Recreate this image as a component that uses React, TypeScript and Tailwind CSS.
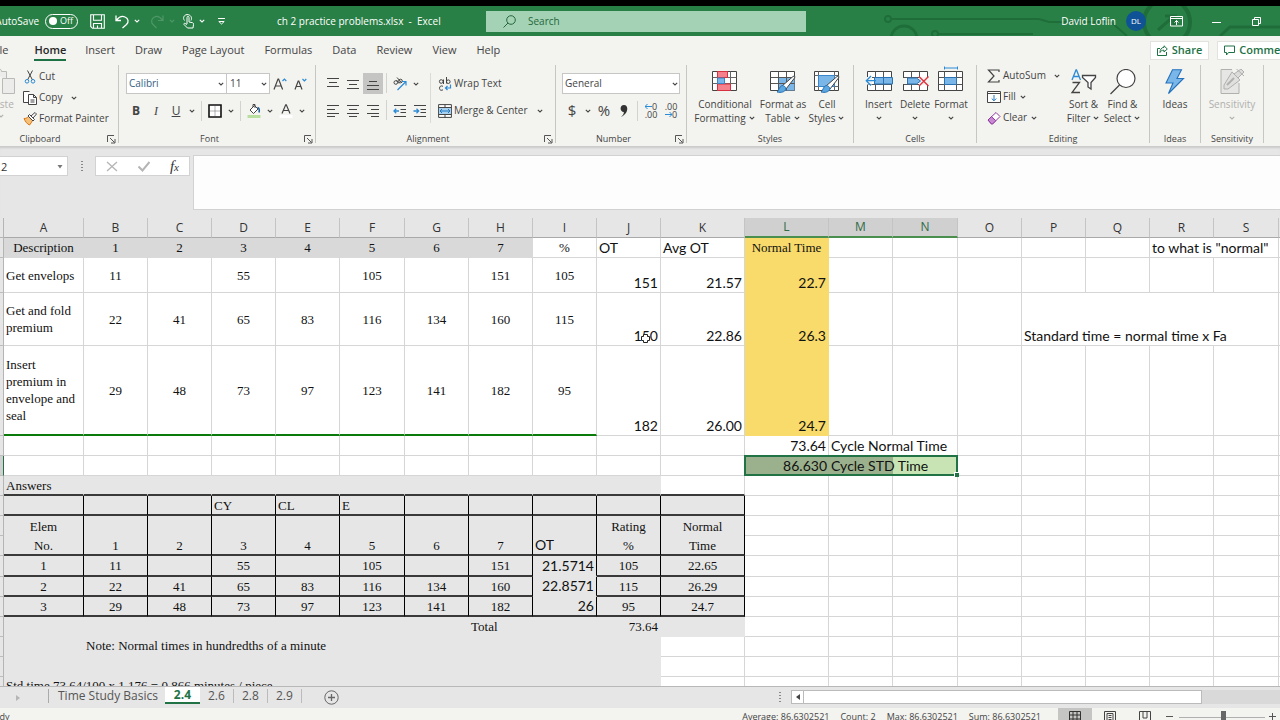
import React from 'react';
import clsx from 'clsx';

type Col = { id: string; width: string };

const COLUMNS: Col[] = [
  { id: 'A', width: 'w-[80px]' },
  { id: 'B', width: 'w-[64px]' },
  { id: 'C', width: 'w-[64px]' },
  { id: 'D', width: 'w-[64px]' },
  { id: 'E', width: 'w-[64px]' },
  { id: 'F', width: 'w-[65px]' },
  { id: 'G', width: 'w-[64px]' },
  { id: 'H', width: 'w-[64px]' },
  { id: 'I', width: 'w-[64px]' },
  { id: 'J', width: 'w-[64px]' },
  { id: 'K', width: 'w-[84px]' },
  { id: 'L', width: 'w-[84px]' },
  { id: 'M', width: 'w-[64px]' },
  { id: 'N', width: 'w-[65px]' },
  { id: 'O', width: 'w-[64px]' },
  { id: 'P', width: 'w-[64px]' },
  { id: 'Q', width: 'w-[64px]' },
  { id: 'R', width: 'w-[64px]' },
  { id: 'S', width: 'w-[65px]' },
  { id: 'T', width: 'w-[64px]' },
];

type Row = { h: string; values: Record<string, string>; spans?: Record<string, number> };

const ROWS: Row[] = [
  {
    h: 'h-[20px]',
    values: { A: 'Description', B: '1', C: '2', D: '3', E: '4', F: '5', G: '6', H: '7', I: '%', J: 'OT', K: 'Avg OT', L: 'Normal Time', R: 'to what is "normal"' },
    spans: { R: 2 },
  },
  { h: 'h-[35px]', values: { A: 'Get envelops', B: '11', D: '55', F: '105', H: '151', I: '105', J: '151', K: '21.57', L: '22.7' } },
  {
    h: 'h-[53px]',
    values: { A: 'Get and fold premium', B: '22', C: '41', D: '65', E: '83', F: '116', G: '134', H: '160', I: '115', J: '150', K: '22.86', L: '26.3', P: 'Standard time = normal time x Fa' },
    spans: { P: 4 },
  },
  { h: 'h-[90px]', values: { A: 'Insert premium in envelope and seal', B: '29', C: '48', D: '73', E: '97', F: '123', G: '141', H: '182', I: '95', J: '182', K: '26.00', L: '24.7' } },
  { h: 'h-[20px]', values: { L: '73.64', M: 'Cycle Normal Time' }, spans: { M: 2 } },
  { h: 'h-[20px]', values: { L: '86.630', M: 'Cycle STD Time' } },
  { h: 'h-[20px]', values: { A: 'Answers' } },
  { h: 'h-[20px]', values: { D: 'CY', E: 'CL', F: 'E' } },
  { h: 'h-[20px]', values: { A: 'Elem', J: 'Rating', K: 'Normal' } },
  { h: 'h-[20px]', values: { A: 'No.', B: '1', C: '2', D: '3', E: '4', F: '5', G: '6', H: '7', I: 'OT', J: '%', K: 'Time' } },
  { h: 'h-[21px]', values: { A: '1', B: '11', D: '55', F: '105', H: '151', I: '21.5714', J: '105', K: '22.65' } },
  { h: 'h-[20px]', values: { A: '2', B: '22', C: '41', D: '65', E: '83', F: '116', G: '134', H: '160', I: '22.8571', J: '115', K: '26.29' } },
  { h: 'h-[20px]', values: { A: '3', B: '29', C: '48', D: '73', E: '97', F: '123', G: '141', H: '182', I: '26', J: '95', K: '24.7' } },
  { h: 'h-[20px]', values: { H: 'Total', J: '73.64' } },
  { h: 'h-[20px]', values: { B: 'Note: Normal times in hundredths of a minute' } },
  { h: 'h-[20px]', values: {} },
  { h: 'h-[20px]', values: { A: 'Std time 73.64/100 x 1.176 = 0.866 minutes / piece' } },
];

const SERIF = "font-['Liberation_Serif',serif] text-[13px]";
const SANS = "font-[Lato,sans-serif] text-[14px] pb-[1px]";

// fill and borders of one cell, r is the 1-based row
const boxStyle = (r: number, c: number) => {
  const grid = 'border-r border-b border-[#d6d6d6]';
  if (c === 11 && r <= 4) return 'border-r border-b border-[#f8db6a] bg-[#f8db6a]';
  if (r === 1 && c <= 7) return 'border-r border-b border-[#d9d9d9] bg-[#d9d9d9]';
  if (r === 4 && c <= 8) return 'border-r border-r-[#d6d6d6] border-b-2 border-b-[#0a7a0a]';
  if (r === 6 && (c === 11 || c === 12)) return 'border-b border-[#9bb08c] bg-[#9bb08c]';
  if (r === 6 && c === 13) return 'border-r border-b border-[#c8e4b4] bg-[#c8e4b4]';
  if (r === 7 && c <= 9) return 'border-r border-r-[#e6e6e6] border-b-2 border-b-[#3a3a3a] bg-[#e6e6e6]';
  if (r === 7 && c === 10) return 'border-r border-r-[#d6d6d6] border-b-2 border-b-[#3a3a3a]';
  if (c === 8 && (r === 11 || r === 12)) return 'border-r border-r-black border-b-2 border-b-[#e6e6e6] bg-[#e6e6e6]';
  if (r === 9 && c <= 10) return 'border-r border-r-black bg-[#e6e6e6]';
  if (r >= 8 && r <= 13 && c <= 10) return 'border-r border-r-black border-b-2 border-b-[#3a3a3a] bg-[#e6e6e6]';
  if (r === 14 && c <= 10) return 'border-r border-b border-[#e6e6e6] bg-[#e6e6e6]';
  if (r >= 15 && c <= 9) return 'border-r border-b border-[#e6e6e6] bg-[#e6e6e6]';
  return grid;
};

const textStyle = (r: number, c: number) => {
  if (c >= 12) return clsx(SANS, 'text-left align-bottom whitespace-nowrap');
  if (r === 1 && (c === 9 || c === 10)) return clsx(SANS, 'text-left align-bottom');
  if (r === 1 && c === 11) return clsx(SERIF, 'text-center align-middle');
  if (r <= 6 && c >= 9) return clsx(SANS, 'text-right align-bottom');
  if (c === 0 && r >= 2 && r <= 4) return clsx(SERIF, 'text-left align-middle');
  if (r === 7 || r === 8) return clsx(SERIF, 'text-left align-bottom');
  if (r >= 15) return clsx(SERIF, 'pb-[2px] text-left align-bottom whitespace-nowrap');
  if (c === 8 && r === 10) return clsx(SANS, 'text-left align-bottom');
  if (c === 8 && r >= 11) return clsx(SANS, 'text-right align-bottom');
  if (r === 14) return clsx(SERIF, c === 9 ? 'text-right' : 'text-left', 'pb-[1px] align-bottom');
  return clsx(SERIF, 'text-center align-middle');
};

const Chevron: React.FC<{ className?: string }> = ({ className }) => (
  <svg viewBox="0 0 8 8" className={clsx('h-2 w-2 shrink-0', className)} fill="none" stroke="currentColor" strokeWidth="1.1">
    <path d="M1.8 2.8 4 5l2.2-2.2" />
  </svg>
);

const Launcher = () => (
  <svg viewBox="0 0 9 9" className="h-[9px] w-[9px]" fill="none" stroke="#555" strokeWidth="1">
    <path d="M.5 7V.5H7M3 3l4.5 4.5M8 4v4H4" />
  </svg>
);

const Brush = () => (
  <g>
    <path d="M13 17 24 7.500c1.500-1 2.500 0 1.500 1.500L17 20Z" fill="#fff" stroke="#444" />
    <path d="M13 16.500c2 0 4 1.500 4 3.500-1 3-5 4-9 3 2-1 2-5.500 5-6.500Z" fill="#5ba7e0" stroke="#2b72b5" />
  </g>
);

const CondIcon = () => (
  <svg viewBox="0 0 26 26" className="h-[26px] w-[26px]" fill="none">
    <path d="M.5 2.500h24v19H.500z" fill="#fff" stroke="#444" />
    <path d="M.5 8.500h24M.5 14.500h24M5.500 2.500v19M18.500 2.500v19" stroke="#666" />
    <path d="M5.500 2.500h10v6h-10zM5.500 15h13v6.500h-13z" fill="#f4818c" stroke="#d9303f" />
    <path d="M5.500 9h7v5.500h-7z" fill="#7ab7e8" stroke="#3a86c8" />
  </svg>
);

const TableIcon = () => (
  <svg viewBox="0 0 28 26" className="h-[26px] w-[28px]" fill="none">
    <path d="M1.500 2.500h24v19h-24z" fill="#fff" stroke="#444" />
    <path d="M9.500 9h16v12.500h-16z" fill="#7ab7e8" />
    <path d="M1.500 8.500h24M1.500 14.500h24M9.500 2.500v19M17.500 2.500v19" stroke="#555" />
    <Brush />
  </svg>
);

const StylesIcon = () => (
  <svg viewBox="0 0 28 26" className="h-[26px] w-[28px]" fill="none">
    <path d="M1.500 2.500h24v19h-24z" fill="#fff" stroke="#444" />
    <path d="M1.500 6.500h24M1.500 17.500h24M5.500 2.500v19M21.500 2.500v19" stroke="#666" />
    <path d="M5.500 6.500h16v11h-16z" fill="#7ab7e8" stroke="#3a86c8" />
    <Brush />
  </svg>
);

const InsertIcon = () => (
  <svg viewBox="0 0 28 26" className="h-[26px] w-[28px]" fill="none">
    <path d="M2.500 2.500h24v19h-24z" fill="#fff" stroke="#444" />
    <path d="M2.500 8.500h24M2.500 15.500h24M10.500 2.500v19M18.500 2.500v19" stroke="#555" />
    <path d="M9.500 8.500h18v6.500h-18z" fill="#7ab7e8" stroke="#2b72b5" />
    <path d="M18.500 8.500V15" stroke="#2b72b5" />
    <path d="M0 8h7v7.500H0z" fill="#f3f3ef" />
    <path d="M11 11.700H1.500M6 7 1.300 11.700 6 16.500" stroke="#2b8bd6" strokeWidth="1.300" />
  </svg>
);

const DeleteIcon = () => (
  <svg viewBox="0 0 28 26" className="h-[26px] w-[28px]" fill="none">
    <path d="M2.500 2.500h24v19h-24z" fill="#fff" stroke="#444" />
    <path d="M2.500 8.500h24M2.500 15.500h24M10.500 2.500v19M18.500 2.500v19" stroke="#555" />
    <path d="M0 9h5v6H0zM18 8h10v8H18z" fill="#f3f3ef" />
    <path d="M6.500 9h9l4 3-4 3h-9z" fill="#7ab7e8" stroke="#2b72b5" />
    <path d="m18 7.500 9.500 9.500M27.500 7.500 18 17" stroke="#e0323f" strokeWidth="1.400" />
  </svg>
);

const FormatIcon = () => (
  <svg viewBox="0 0 28 26" className="h-[26px] w-[28px] overflow-visible" fill="none">
    <path d="M7.500-2.500v3M20.500-2.500v3M7.500-1h13" stroke="#2b8bd6" />
    <path d="M1.500 2.500h24v19h-24z" fill="#fff" stroke="#444" />
    <path d="M1.500 8.500h24M1.500 15.500h24M7.500 2.500v19M19.500 2.500v19" stroke="#555" />
    <path d="M7.500 8.500h12v7h-12z" fill="#7ab7e8" stroke="#2b72b5" />
  </svg>
);

const SortIcon = () => (
  <svg viewBox="0 0 28 26" className="h-[26px] w-[28px]" fill="none" strokeWidth="1.300">
    <path d="M2 11 6 1h.5l4 10M3.500 7.500H9" stroke="#2b8bd6" />
    <path d="M2.500 13.500h7L2 23.500h8" stroke="#444" />
    <path d="M12.500 6.500h13v2l-4.500 5v6.500l-3-2v-4.500l-5.500-5z" fill="#fff" stroke="#444" />
  </svg>
);

const FindIcon = () => (
  <svg viewBox="0 0 28 26" className="h-[26px] w-[28px]" fill="none" stroke="#444" strokeWidth="1.200">
    <circle cx="17" cy="9.500" r="9" fill="#fff" />
    <path d="M10.500 16 1.500 25" />
  </svg>
);

const IdeasIcon = () => (
  <svg viewBox="0 0 20 26" className="h-[26px] w-[20px]" fill="#7ab7e8" stroke="#2472bd" strokeWidth="1.100">
    <path d="M7.500.800h9L12 9.500h6.500L3.500 24.500 8 14H1z" />
  </svg>
);

const SensitivityIcon = () => (
  <svg viewBox="0 0 26 26" className="h-[26px] w-[26px]" fill="none" stroke="#b0b0ae">
    <path d="M13 .500H2v24h18V14" fill="#e6e6e4" />
    <path d="m13 3 8 8L9 20H5v-4Z" fill="#e0e0de" />
    <path d="m8 16 7-7" strokeWidth="2" />
    <path d="m14 4 6 6M17-.500 25 7M22 0l3 3-6 6-4-4z" fill="#dcdcda" />
  </svg>
);

const ScissorsIcon = () => (
  <svg viewBox="0 0 14 14" className="h-[14px] w-[14px]" fill="none">
    <path d="M4.500.500 9.500 10M9.500.500 4.500 10" stroke="#444" />
    <circle cx="4" cy="11.300" r="1.800" stroke="#2b8bd6" />
    <circle cx="10" cy="11.300" r="1.800" stroke="#2b8bd6" />
  </svg>
);

const CopyIcon = () => (
  <svg viewBox="0 0 14 14" className="h-[14px] w-[14px]" fill="#fff" stroke="#444">
    <path d="M5 11.500H.500v-11h6" />
    <path d="M5.500 3.500h5l3 3v7h-8zM10.500 3.500v3h3M7.500 9h4M7.500 11h4" />
  </svg>
);

const PainterIcon = () => (
  <svg viewBox="0 0 14 14" className="h-[14px] w-[14px]" fill="none" stroke="#444">
    <path d="M1 6.500c2 0 3-.5 4.500-2l4 4c-1 1.500-1.500 3-3 4.500C4 12 2 9 1 6.500Z" fill="#f6c078" stroke="#d9730d" />
    <path d="M5 4 6.500 2.500l5 5L10 9zM8 4l4-3.500 1.500 1.500L10 6" fill="#fff" />
  </svg>
);

const PasteIcon = () => (
  <svg viewBox="0 0 28 28" className="h-[28px] w-[28px]" fill="#ececea" stroke="#b9b9b7">
    <path d="M2.500 3.500h5c0-4 7-4 7 0h5v8M12 24.500H2.500v-21" />
    <path d="M15.500 10.500h12v15h-12z" />
  </svg>
);

const LINES = {
  top: 'M1 1.500h12M3 5.500h8M1 9.500h12',
  middle: 'M1 3.500h12M3 7.500h8M1 11.500h12',
  bottom: 'M3 4.500h8M1 8.500h12M1 12.500h12',
  left: 'M1 1.500h12M1 5.500h8M1 9.500h12M1 12.500h8',
  center: 'M1 1.500h12M3 5.500h8M1 9.500h12M3 12.500h8',
  right: 'M1 1.500h12M5 5.500h8M1 9.500h12M5 12.500h8',
};

const LinesIcon: React.FC<{ kind: keyof typeof LINES }> = ({ kind }) => (
  <svg viewBox="0 0 14 14" className="h-[14px] w-[14px]" stroke="#444" strokeWidth="1.100">
    <path d={LINES[kind]} />
  </svg>
);

const IndentIcon: React.FC<{ inward?: boolean }> = ({ inward }) => (
  <svg viewBox="0 0 14 14" className="h-[14px] w-[14px]" stroke="#444" fill="none">
    <path d="M1 1.500h12M7.500 5.500H13M7.500 8.500H13M1 12.500h12" />
    <path d={inward ? 'M.500 7h5M3.500 4.800 5.700 7 3.500 9.200' : 'M1 7h5M3.200 4.800 1 7l2.200 2.200'} stroke="#2b8bd6" strokeWidth="1.300" />
  </svg>
);

const IconButton: React.FC<{ label: string; className?: string; children: React.ReactNode }> = ({ label, className, children }) => (
  <button aria-label={label} className={clsx('flex h-[21px] w-5 shrink-0 items-center justify-center', className)}>
    {children}
  </button>
);

const Drop: React.FC<{ label: string }> = ({ label }) => (
  <button aria-label={label} className="flex h-[21px] w-3 shrink-0 items-center justify-center">
    <Chevron />
  </button>
);

const Sep = () => <div className="mx-[3px] h-5 w-px shrink-0 bg-[#d2d2cf]" />;

const Group: React.FC<{ title: string; className: string; launcher?: boolean; children: React.ReactNode }> = ({ title, className, launcher, children }) => (
  <>
    <section aria-label={title} className={clsx('flex shrink-0 flex-col', className)}>
      <div className="flex h-[67px]">{children}</div>
      <div className="flex h-[14px] items-center text-[9px]">
        <div className="flex-1 text-center">{title}</div>
        {launcher && (
          <button aria-label={`${title} settings`} className="mr-[2px] ml-[4px]">
            <Launcher />
          </button>
        )}
      </div>
    </section>
    <div className="h-[78px] w-px shrink-0 bg-[#c6c6c3]" />
  </>
);

const BigButton: React.FC<{ icon: React.ReactNode; lines: string[]; className: string; noArrow?: boolean }> = ({ icon, lines, className, noArrow }) => (
  <button className={clsx('flex flex-col items-center pt-[4px]', className)}>
    {icon}
    <span className="mt-[2px] flex flex-col items-center leading-[14px] whitespace-nowrap">
      {lines.map((line, i) => (
        <span key={line} className="flex items-center gap-[2px]">
          {line}
          {i > 0 && <Chevron />}
        </span>
      ))}
      {lines.length === 1 && !noArrow && <Chevron className="mt-[3px]" />}
    </span>
  </button>
);

const RowButton: React.FC<{ icon: React.ReactNode; label: string; arrow?: string }> = ({ icon, label, arrow }) => (
  <button className="flex h-[21px] items-center whitespace-nowrap">
    <span className="flex w-4 justify-start">{icon}</span>
    {label}
    {arrow && <Chevron className={arrow} />}
  </button>
);

const TitleBar = () => (
  <header className="relative flex h-[30px] shrink-0 items-center overflow-hidden bg-[#288046] text-[10px] text-white">
    <svg viewBox="0 0 400 30" className="absolute top-0 right-0 h-[30px] w-[400px]" fill="none" stroke="#1f6e3a" strokeWidth="2">
      <circle cx="8" cy="13" r="3" />
      <path d="M11 13h148l10 3h62l16 14" />
      <circle cx="24" cy="33" r="13" strokeWidth="3" />
      <path d="M58 28h95" />
      <circle cx="55" cy="28" r="3" />
      <circle cx="287" cy="16" r="23" strokeWidth="4" />
      <path d="m278 24 16-14h-9M294 10v10M340 30l10-9h50" strokeWidth="3" />
    </svg>
    <div className="relative flex w-[277px] shrink-0 items-center">
      <div className="-ml-[9px] flex items-center gap-[6px]">
        <span id="autosave" className="w-[48px] text-right">AutoSave</span>
        <button role="switch" aria-checked="false" aria-labelledby="autosave" className="flex h-[15px] w-[33px] items-center justify-between rounded-full border border-white pr-[4px] pl-[3px] text-[9px]">
          <span className="h-[8px] w-[8px] rounded-full bg-white" />
          Off
        </button>
      </div>
      <button aria-label="Save" className="ml-[12px]">
        <svg viewBox="0 0 15 15" className="h-[15px] w-[15px]" fill="none" stroke="#fff" strokeWidth="1.100">
          <path d="M.7.700h13.600v13.600H2.500L.700 12.500zM3.500.700v5.500h8V.700M3.500 14V9.500h8V14M7.500 11.500V14" />
        </svg>
      </button>
      <button aria-label="Undo" className="ml-[10px] flex items-center">
        <svg viewBox="0 0 15 15" className="h-[15px] w-[15px]" fill="none" stroke="#fff" strokeWidth="1.300">
          <path d="M1 1.500v5h5M1.500 6C4 3 7 1.500 10 3c3.500 1.500 4 5 1.500 7.500L7.500 14" />
        </svg>
        <Chevron className="ml-[3px]" />
      </button>
      <button aria-label="Redo" className="ml-[9px] flex items-center text-[#4f9768]">
        <svg viewBox="0 0 15 15" className="h-[15px] w-[15px]" fill="none" stroke="currentColor" strokeWidth="1.200">
          <path d="M13 1.500v5H8M12.500 6C10 3 7 1.500 4.500 3 1.500 4.500.500 8 3 10.500L6.500 14" />
        </svg>
        <Chevron className="ml-[3px]" />
      </button>
      <button aria-label="Touch mode" className="ml-[6px] flex items-center">
        <svg viewBox="0 0 13 15" className="h-[15px] w-[13px]" fill="none" stroke="#fff">
          <path d="M5 10V3.500c0-1.500 2-1.500 2 0V8l3.500.700c1 .300 1.200 1 1 2L11 14H5.500L2 10.500c-.5-1 .5-1.500 1.200-1L5 10.500M2.500 6.500C.500 4 2 .800 5 .600c3.500-.2 5.500 2.900 4 5.900" />
        </svg>
        <Chevron className="ml-[3px]" />
      </button>
      <button aria-label="Customize toolbar" className="ml-[11px]">
        <svg viewBox="0 0 9 9" className="h-[9px] w-[9px]" fill="none" stroke="#fff">
          <path d="M1 1.500h7M1.800 4.500 4.500 7l2.700-2.500z" />
        </svg>
      </button>
    </div>
    <div className="w-[209px] shrink-0 whitespace-pre">ch 2 practice problems.xlsx&nbsp; -&nbsp; Excel</div>
    <label className="relative flex h-[21px] w-80 items-center bg-[#a3d3b4] pl-[17px] text-[#26663c]">
      <svg viewBox="0 0 13 13" className="h-[13px] w-[13px]" fill="none" stroke="currentColor">
        <circle cx="8" cy="5" r="4.300" />
        <path d="M5 8 .500 12.500" />
      </svg>
      <input type="search" aria-label="Search" placeholder="Search" className="ml-[12px] w-40 bg-transparent outline-none placeholder:text-[#26663c]" />
    </label>
    <div className="relative ml-auto flex items-center pr-[19px]">
      <span>David Loflin</span>
      <span className="ml-[10px] flex h-5 w-5 items-center justify-center rounded-full bg-[#0f5296] text-[8px]">DL</span>
      <button aria-label="Ribbon display options" className="ml-6">
        <svg viewBox="0 0 13 11" className="h-[11px] w-[13px]" fill="none" stroke="#fff">
          <path d="M.5.500h12v9.500H.500zM.5 2.500h12M6.500 9V4.500M4.500 6.500l2-2 2 2" />
        </svg>
      </button>
      <button aria-label="Minimize" className="ml-[29px]">
        <svg viewBox="0 0 9 9" className="h-[9px] w-[9px]" stroke="#fff">
          <path d="M0 5.500h9" />
        </svg>
      </button>
      <button aria-label="Restore" className="ml-[31px]">
        <svg viewBox="0 0 9 9" className="h-[9px] w-[9px]" fill="none" stroke="#fff">
          <path d="M.5 2.500h6v6h-6zM2.500 2.500v-2h6v6h-2" />
        </svg>
      </button>
    </div>
  </header>
);

const TABS = ['Insert', 'Draw', 'Page Layout', 'Formulas', 'Data', 'Review', 'View', 'Help'];

const TabStrip = () => (
  <nav aria-label="Ribbon tabs" className="flex h-[28px] items-center text-[11px] whitespace-nowrap">
    <a href="#file" className="-ml-[9px]">File</a>
    <a href="#home" className="ml-[26px] flex h-[22px] items-center border-b-2 border-[#1e7145] pt-[2px] font-semibold text-[#262626]">Home</a>
    <div className="ml-[19px] flex gap-[20px]">
      {TABS.map((tab) => (
        <a key={tab} href={`#${tab}`}>{tab}</a>
      ))}
    </div>
    <div className="-mr-6 ml-auto flex gap-2 font-semibold text-[#1e7145]">
      <button className="flex h-[19px] items-center gap-1 border border-[#e2e2e0] bg-white px-[6px]">
        <svg viewBox="0 0 11 11" className="h-[11px] w-[11px]" fill="none" stroke="currentColor">
          <path d="M3 3.500H.500v7h9V7M7 .800 10.300 4 7 7V5.200c-2 0-3.500.800-4 2.300 0-3 1.500-5 4-5.200z" />
        </svg>
        Share
      </button>
      <button className="flex h-[19px] items-center gap-1 border border-[#e2e2e0] bg-white px-[6px]">
        <svg viewBox="0 0 11 11" className="h-[11px] w-[11px]" fill="none" stroke="currentColor">
          <path d="M.5 1h10v6.500H4.500l-2 2.500V7.500h-2z" />
        </svg>
        Comments
      </button>
    </div>
  </nav>
);

const Ribbon = () => (
  <div className="flex h-[82px] overflow-hidden pt-[1px] text-[10px] text-[#444]">
    <Group title="Clipboard" className="-ml-[23px] w-[141px]" launcher>
      <button className="mr-[5px] ml-[7px] flex w-[34px] shrink-0 flex-col items-center pt-[3px] text-[#b0b0ae]">
        <PasteIcon />
        <span className="leading-[16px]">Paste</span>
        <Chevron />
      </button>
      <div className="flex flex-col pt-[1px]">
        <RowButton icon={<ScissorsIcon />} label="Cut" />
        <RowButton icon={<CopyIcon />} label="Copy" arrow="ml-[8px]" />
        <RowButton icon={<PainterIcon />} label="Format Painter" />
      </div>
    </Group>

    <Group title="Font" className="w-[196px]" launcher>
      <div className="flex flex-col gap-[6px] pt-[8px] pl-[7px]">
        <div className="flex items-center">
          <div className="relative flex">
            <select aria-label="Font" className="h-[21px] w-[101px] appearance-none border border-[#c6c6c4] bg-white pl-[2px] text-[#345f85]">
              <option>Calibri</option>
            </select>
            <Chevron className="pointer-events-none absolute top-[7px] right-[2px]" />
          </div>
          <div className="relative flex">
            <select aria-label="Font size" className="h-[21px] w-[43px] appearance-none border border-l-0 border-[#c6c6c4] bg-white pl-[3px]">
              <option>11</option>
            </select>
            <Chevron className="pointer-events-none absolute top-[7px] right-[2px]" />
          </div>
          <IconButton label="Increase font size">
            <svg viewBox="0 0 14 14" className="h-[14px] w-[14px]" fill="none" stroke="#444" strokeWidth="1.200">
              <path d="M1 12.500 5 2h.6l4 10.500M2.500 9H8" />
              <path d="m9.500 4 1.900-1.900L13.300 4" stroke="#2b8bd6" />
            </svg>
          </IconButton>
          <IconButton label="Decrease font size">
            <svg viewBox="0 0 14 14" className="h-[14px] w-[14px]" fill="none" stroke="#444" strokeWidth="1.200">
              <path d="M2 12.500 5.200 4h.6L9 12.500M3 9.500h5" />
              <path d="m9.500 2 1.900 1.900L13.300 2" stroke="#2b8bd6" />
            </svg>
          </IconButton>
        </div>
        <div className="flex items-center text-[12px]">
          <IconButton label="Bold" className="font-bold">B</IconButton>
          <IconButton label="Italic" className="font-['Liberation_Serif',serif] italic">I</IconButton>
          <IconButton label="Underline" className="underline">U</IconButton>
          <Drop label="Underline options" />
          <Sep />
          <IconButton label="Borders">
            <svg viewBox="0 0 14 14" className="h-[14px] w-[14px]" fill="#fff" stroke="#111">
              <path d="M1 1h12v12H1z" strokeWidth="1.600" />
              <path d="M7 2.500v9M2.500 7h9" stroke="#666" strokeDasharray="1 1" />
            </svg>
          </IconButton>
          <Drop label="Border options" />
          <Sep />
          <IconButton label="Fill color">
            <svg viewBox="0 0 14 14" className="h-[14px] w-[14px]" fill="none" stroke="#444">
              <path d="M.500 11h13v3H.500z" fill="#b9dfa0" stroke="none" />
              <path d="m3 6 4.500-4.500L11 5 6.500 9.500zM6 3V.500h2V4" fill="#fff" />
              <path d="M10.500 3.500c2 .5 2 3 1.500 5" stroke="#1b5e9b" strokeWidth="1.500" />
            </svg>
          </IconButton>
          <Drop label="Fill color options" />
          <IconButton label="Font color">
            <svg viewBox="0 0 14 14" className="h-[14px] w-[14px]" fill="none" stroke="#444" strokeWidth="1.200">
              <path d="M.5 11h13v3H.500z" fill="#fff" stroke="none" />
              <path d="M3 9.500 6.700.800h.6L11 9.500M4.500 6.500h5" />
            </svg>
          </IconButton>
          <Drop label="Font color options" />
        </div>
      </div>
    </Group>

    <Group title="Alignment" className="w-[239px]" launcher>
      <div className="flex items-start pt-[8px] pl-[7px]">
        <div className="flex flex-col gap-[6px]">
          <div className="flex">
            <IconButton label="Top align"><LinesIcon kind="top" /></IconButton>
            <IconButton label="Middle align"><LinesIcon kind="middle" /></IconButton>
            <IconButton label="Bottom align" className="bg-[#c5c5c3]"><LinesIcon kind="bottom" /></IconButton>
            <Sep />
            <IconButton label="Orientation">
              <svg viewBox="0 0 14 14" className="h-[14px] w-[14px]" fill="none" stroke="#444">
                <circle cx="2.800" cy="5.500" r="1.800" />
                <circle cx="7.500" cy="4" r="1.800" />
                <path d="m3.500 3 2.500 3.500M4 .500l4.500 5" />
                <path d="M4.500 13 12.500 5M9 4.500h4v4" stroke="#2b8bd6" strokeWidth="1.200" />
              </svg>
            </IconButton>
            <Drop label="Orientation options" />
          </div>
          <div className="flex">
            <IconButton label="Align left"><LinesIcon kind="left" /></IconButton>
            <IconButton label="Center"><LinesIcon kind="center" /></IconButton>
            <IconButton label="Align right"><LinesIcon kind="right" /></IconButton>
            <Sep />
            <IconButton label="Decrease indent"><IndentIcon /></IconButton>
            <IconButton label="Increase indent"><IndentIcon inward /></IconButton>
          </div>
        </div>
        <div className="h-[50px] w-px bg-[#dadad7]" />
        <div className="flex flex-col gap-[6px] pl-[7px]">
          <button className="flex h-[21px] items-center gap-[2px]">
            <svg viewBox="0 0 14 14" className="h-[14px] w-[14px]" fill="none" stroke="#444">
              <circle cx="3.200" cy="4.500" r="1.800" />
              <path d="M5.500 2.500V7M8.500 0v6.500M5 9.300c-2-1-3.500 0-3.500 2s2 2.500 3.500 1.500" />
              <circle cx="10.300" cy="4.700" r="1.800" />
              <path d="M12.500 7.500v3.500H7.500M9.500 9l-2 2 2 2" stroke="#2b8bd6" strokeWidth="1.200" />
            </svg>
            Wrap Text
          </button>
          <button className="flex h-[21px] items-center gap-[2px] whitespace-nowrap">
            <svg viewBox="0 0 14 14" className="h-[14px] w-[14px]" fill="none" stroke="#444">
              <path d="M.6.600h12.800v12.800H.600z" fill="#fff" />
              <path d="M.6 3.500h12.800M.6 10.500h12.800M7 .500v3M7 10.500v3" />
              <path d="M1 4h12v6H1z" fill="#a9d2f1" stroke="none" />
              <path d="M2 7h10M4 5 2 7l2 2M10 5l2 2-2 2" stroke="#1f78c1" />
            </svg>
            Merge &amp; Center
            <Chevron className="ml-[6px]" />
          </button>
        </div>
      </div>
    </Group>

    <Group title="Number" className="w-[130px]" launcher>
      <div className="flex flex-col gap-[6px] pt-[8px] pl-[6px]">
        <div className="relative flex">
          <select aria-label="Number format" className="h-[21px] w-[118px] appearance-none border border-[#c6c6c4] bg-white pl-[2px]">
            <option>General</option>
          </select>
          <Chevron className="pointer-events-none absolute top-[7px] right-[2px]" />
        </div>
        <div className="flex items-center text-[15px]">
          <IconButton label="Accounting format">$</IconButton>
          <Drop label="Currency options" />
          <IconButton label="Percent style">%</IconButton>
          <IconButton label="Comma style">
            <svg viewBox="0 0 8 12" className="h-[12px] w-[8px]" fill="#333">
              <path d="M4 0c5 0 4.500 9-3 12 2-2 3-3.500 2.800-5C-.5 7-.5 0 4 0Z" />
            </svg>
          </IconButton>
          <Sep />
          <IconButton label="Increase decimal" className="flex-col text-[9px] leading-[8px]">
            <span className="flex items-center">
              <svg viewBox="0 0 7 7" className="h-[7px] w-[7px]" fill="none" stroke="#2b8bd6"><path d="M0 3.500h7M2.500 1 0 3.500 2.500 6" /></svg>0
            </span>
            <span>.00</span>
          </IconButton>
          <IconButton label="Decrease decimal" className="flex-col text-[9px] leading-[8px]">
            <span>.00</span>
            <span className="flex items-center">
              <svg viewBox="0 0 7 7" className="h-[7px] w-[7px]" fill="none" stroke="#2b8bd6"><path d="M0 3.500h7M4.500 1 7 3.500 4.500 6" /></svg>0
            </span>
          </IconButton>
        </div>
      </div>
    </Group>

    <Group title="Styles" className="w-[166px]">
      <BigButton icon={<CondIcon />} lines={['Conditional', 'Formatting']} className="w-[76px]" />
      <BigButton icon={<TableIcon />} lines={['Format as', 'Table']} className="w-[40px]" />
      <BigButton icon={<StylesIcon />} lines={['Cell', 'Styles']} className="w-[48px]" />
    </Group>

    <Group title="Cells" className="w-[122px]">
      <BigButton icon={<InsertIcon />} lines={['Insert']} className="ml-[6px] w-[37px]" />
      <BigButton icon={<DeleteIcon />} lines={['Delete']} className="w-[36px]" />
      <BigButton icon={<FormatIcon />} lines={['Format']} className="w-[36px]" />
    </Group>

    <Group title="Editing" className="w-[172px]">
      <div className="flex w-[88px] flex-col pl-[10px]">
        <RowButton
          label="AutoSum"
          arrow="ml-[7px]"
          icon={
            <svg viewBox="0 0 14 14" className="h-[14px] w-[14px]" fill="none" stroke="#444" strokeWidth="1.200">
              <path d="M12 3V1H1.500L7 7l-5.500 6H12v-2" />
            </svg>
          }
        />
        <RowButton
          label="Fill"
          arrow="ml-[3px]"
          icon={
            <svg viewBox="0 0 14 14" className="h-[14px] w-[14px]" fill="#fff" stroke="#444">
              <path d="M.5 1.500h13v11H.500zM.5 3.500h13" />
              <path d="M7 5v5.500M4.700 8.500 7 10.800l2.300-2.300" stroke="#1f78c1" fill="none" />
            </svg>
          }
        />
        <RowButton
          label="Clear"
          arrow="ml-[3px]"
          icon={
            <svg viewBox="0 0 14 14" className="h-[14px] w-[14px]" fill="#fff" stroke="#8e3a9d">
              <path d="m1 9 8-7.500 4 4L5.500 13H4.500z" />
              <path d="m1 9 3.500-3.300 4.300 4L5.500 13H4.500z" fill="#c98ad4" />
            </svg>
          }
        />
      </div>
      <BigButton icon={<SortIcon />} lines={['Sort &', 'Filter']} className="w-[37px]" />
      <BigButton icon={<FindIcon />} lines={['Find &', 'Select']} className="w-[41px]" />
    </Group>

    <Group title="Ideas" className="w-[50px]">
      <BigButton icon={<IdeasIcon />} lines={['Ideas']} className="w-[50px]" noArrow />
    </Group>

    <Group title="Sensitivity" className="w-[62px]">
      <BigButton icon={<SensitivityIcon />} lines={['Sensitivity']} className="w-[62px] text-[#b0b0ae]" />
    </Group>
  </div>
);

const FormulaBar = () => (
  <div className="flex h-[72px] shrink-0 items-start bg-[#e6e6e6] shadow-[inset_0_3px_2px_-1px_#cbcbcb]">
    <div className="relative mt-[10px] -ml-[12px] flex">
      <input aria-label="Name box" defaultValue="L12" className="h-[20px] w-[80px] border border-[#d2d2d2] bg-white text-[11px] text-[#333] outline-none" />
      <svg viewBox="0 0 6 6" className="absolute top-[8px] right-[5px] h-[6px] w-[6px]" fill="#777"><path d="M.5 1h5L3 4.500z" /></svg>
    </div>
    <svg viewBox="0 0 2 12" className="mt-[14px] ml-[13px] h-[12px] w-[2px]" fill="#888"><path d="M0 1h2v1H0zM0 4h2v1H0zM0 7h2v1H0zM0 10h2v1H0z" /></svg>
    <div className="mt-[10px] ml-[12px] flex h-[20px] w-[95px] items-center justify-around border border-[#d2d2d2] bg-white">
      <button aria-label="Cancel">
        <svg viewBox="0 0 12 12" className="h-[12px] w-[12px]" stroke="#b5b5b5" strokeWidth="1.300"><path d="m1 2 10 9M11 2 1 11" /></svg>
      </button>
      <button aria-label="Enter">
        <svg viewBox="0 0 12 12" className="h-[12px] w-[12px]" fill="none" stroke="#b5b5b5" strokeWidth="2"><path d="m.5 6.500 4 4L11.500 2" /></svg>
      </button>
      <button className="font-['Liberation_Serif',serif] text-[15px] leading-[18px] text-[#333] italic">
        f<span className="text-[11px]">x</span>
      </button>
    </div>
    <textarea aria-label="Formula" className="mt-[9px] ml-[3px] h-[55px] flex-1 resize-none border border-r-0 border-[#d2d2d2] bg-[#fdfdfd] outline-none" />
  </div>
);

const CrossCursor = () => (
  <svg viewBox="0 0 13 13" className="absolute right-[8px] bottom-0 h-[13px] w-[13px]" fill="#fff" stroke="#222">
    <path d="M4.500 2.500h4v2h2v4h-2v2h-4v-2h-2v-4h2z" />
  </svg>
);

const Sheet = () => (
  <main className="min-h-0 flex-1 overflow-hidden bg-white">
    <table className="w-[1343px] table-fixed border-separate border-spacing-0 text-[#111]">
      <thead>
        <tr className="h-[20px] bg-[#e6e6e6] text-[12px] leading-[16px] text-[#333]">
          <th className="w-[4px] border-r border-b border-[#b5b5b5]" />
          {COLUMNS.map((col, c) => (
            <th
              key={col.id}
              className={clsx(
                col.width,
                'border-r border-r-[#c4c4c4] p-0 font-normal',
                c >= 11 && c <= 13 ? 'border-b-2 border-b-[#4a8f4e] bg-[#d0d0d0] text-[#2f6b46]' : 'border-b border-b-[#a9a9a9]',
              )}
            >
              {col.id}
            </th>
          ))}
        </tr>
      </thead>
      <tbody>
        {ROWS.map((row, i) => {
          const r = i + 1;
          let covered = 0;
          return (
            <tr key={r} className={row.h}>
              <th className={clsx('border-r border-b border-b-[#bdbdbd] p-0', r === 6 ? 'border-r-[#217346] bg-[#d0d0d0]' : 'border-r-[#b5b5b5] bg-[#e6e6e6]')} />
              {COLUMNS.map((col, c) => {
                if (covered > 0) {
                  covered -= 1;
                  return null;
                }
                const span = row.spans?.[col.id] ?? 1;
                covered = span - 1;
                const hasCursor = r === 3 && col.id === 'J';
                const hasSelection = r === 6 && col.id === 'L';
                return (
                  <td
                    key={col.id}
                    colSpan={span}
                    className={clsx('px-[2px] pt-0 leading-[17px]', (hasCursor || hasSelection) && 'relative', boxStyle(r, c), textStyle(r, c))}
                  >
                    {row.values[col.id]}
                    {hasCursor && <CrossCursor />}
                    {hasSelection && (
                      <div className="pointer-events-none absolute -top-[1px] -left-[1px] h-[21px] w-[214px] border-2 border-[#217346]">
                        <div className="absolute -right-[3px] -bottom-[3px] h-[5px] w-[5px] border-t border-l border-white bg-[#217346]" />
                      </div>
                    )}
                  </td>
                );
              })}
            </tr>
          );
        })}
      </tbody>
    </table>
  </main>
);

const SheetTabs = () => (
  <div className="flex h-[22px] shrink-0 items-start border-t border-[#b8b8b8] bg-[#e6e6e6] text-[12px] text-[#555]">
    <svg viewBox="0 0 6 6" className="mt-[8px] ml-[15px] h-[6px] w-[6px]" fill="#b5b5b5"><path d="M1 0v6l4-3z" /></svg>
    <div className="ml-[27px] flex h-[17px] items-center">
      <button className="h-[14px] border-l border-[#aaa] pr-[7px] pl-[9px] leading-[14px]">Time Study Basics</button>
      <button className="h-[17px] w-[35px] border-b-2 border-[#217346] bg-white leading-[15px] font-bold text-[#217346]">2.4</button>
      {['2.6', '2.8', '2.9'].map((name) => (
        <button key={name} className="h-[14px] w-[34px] border-r border-[#bbb] leading-[14px]">{name}</button>
      ))}
    </div>
    <button aria-label="New sheet" className="mt-[3px] ml-[22px]">
      <svg viewBox="0 0 15 15" className="h-[15px] w-[15px]" fill="none" stroke="#666">
        <circle cx="7.500" cy="7.500" r="6.700" />
        <path d="M7.500 4v7M4 7.500h7" strokeWidth="1.300" />
      </svg>
    </button>
    <div className="ml-auto flex w-[501px] items-center">
      <svg viewBox="0 0 2 10" className="mt-[3px] h-[10px] w-[2px]" fill="#888"><path d="M0 0h2v1H0zM0 3h2v1H0zM0 6h2v1H0zM0 9h2v1H0z" /></svg>
      <div className="mt-[3px] ml-[10px] flex h-[14px] flex-1 bg-[#d9d9d9]">
        <button aria-label="Scroll left" className="flex w-[13px] items-center justify-center border border-[#bbb] bg-white">
          <svg viewBox="0 0 6 6" className="h-[6px] w-[6px]" fill="#444"><path d="M5 0v6L1 3z" /></svg>
        </button>
        <div className="mr-[78px] flex-1 border border-l-0 border-[#bbb] bg-white" />
      </div>
    </div>
  </div>
);

const StatusBar = () => (
  <footer className="flex h-[12px] shrink-0 items-start overflow-hidden bg-[#f3f3ef] text-[9px] leading-[18px] text-[#444]">
    <span className="-ml-[16px]">Ready</span>
    <div className="ml-auto flex shrink-0 items-start">
      <div className="mr-[17px] flex gap-[11px]">
        <span>Average: 86.6302521</span>
        <span>Count: 2</span>
        <span>Max: 86.6302521</span>
        <span>Sum: 86.6302521</span>
      </div>
      <button aria-label="Normal view" className="flex h-[18px] w-[34px] justify-center bg-[#c5c5c3] pt-[3px]">
        <svg viewBox="0 0 12 12" className="h-[12px] w-[12px]" fill="none" stroke="#333"><path d="M.5.500h11v11H.500zM.5 4h11M.5 8h11M4 .500v11M8 .500v11" /></svg>
      </button>
      <button aria-label="Page layout view" className="flex w-[35px] justify-center pt-[3px]">
        <svg viewBox="0 0 12 12" className="h-[12px] w-[12px]" fill="none" stroke="#444"><path d="M.5.500h11v11H.500zM3 2.500h6v8H3zM4.500 4.500h3M4.500 6.500h3M4.500 8.500h3" /></svg>
      </button>
      <button aria-label="Page break view" className="flex w-[35px] justify-center pt-[3px]">
        <svg viewBox="0 0 12 12" className="h-[12px] w-[12px]" fill="none" stroke="#444"><path d="M.5.500h11v11H.500zM4 .500v6.500h4V.500" /></svg>
      </button>
      <button aria-label="Zoom out" className="ml-[4px] pt-[5px]">
        <svg viewBox="0 0 7 7" className="h-[7px] w-[7px]" stroke="#555"><path d="M0 3.500h7" /></svg>
      </button>
      <input
        type="range"
        aria-label="Zoom"
        defaultValue={52}
        className="mt-[3px] mr-[4px] ml-[6px] h-[12px] w-[86px] appearance-none bg-[linear-gradient(#b0b0b0,#b0b0b0)] bg-size-[100%_1px] bg-center bg-no-repeat [&::-webkit-slider-thumb]:h-[12px] [&::-webkit-slider-thumb]:w-[5px] [&::-webkit-slider-thumb]:appearance-none [&::-webkit-slider-thumb]:bg-[#666]"
      />
      <button aria-label="Zoom in" className="mr-[4px] pt-[5px]">
        <svg viewBox="0 0 7 7" className="h-[7px] w-[7px]" stroke="#555"><path d="M0 3.500h7M3.500 0v7" /></svg>
      </button>
    </div>
  </footer>
);

const App: React.FC = () => (
  <div className="flex h-screen flex-col overflow-hidden border-t-[6px] border-black bg-white font-['Open_Sans',sans-serif]">
    <TitleBar />
    <div className="shrink-0 bg-[#f3f3ef] text-[#444]">
      <TabStrip />
      <Ribbon />
    </div>
    <FormulaBar />
    <Sheet />
    <SheetTabs />
    <StatusBar />
  </div>
);

export default App;
